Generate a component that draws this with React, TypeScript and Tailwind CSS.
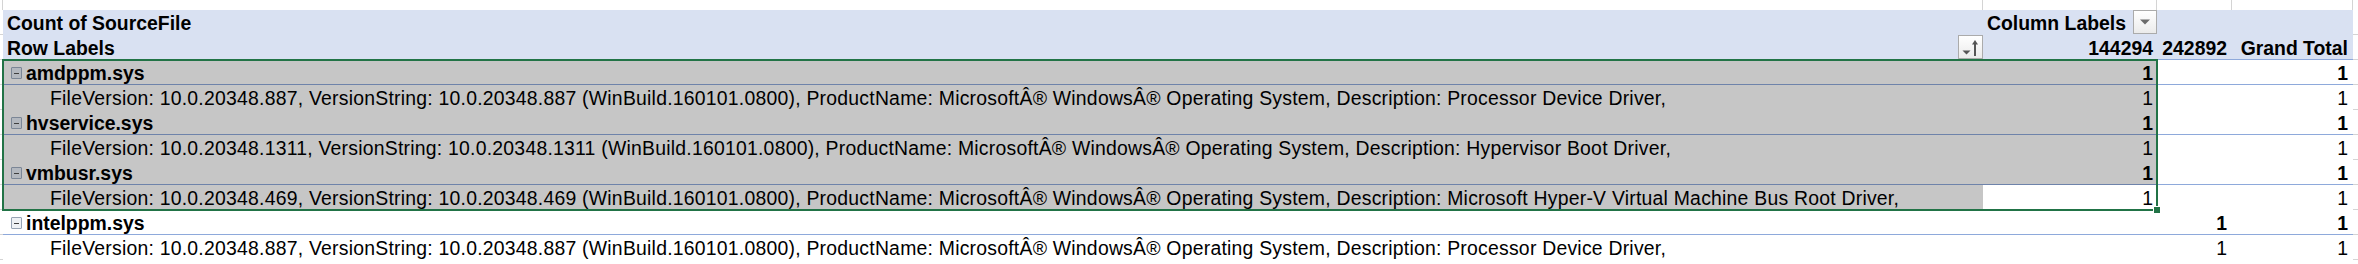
import React from 'react';
import clsx from 'clsx';

type PivotRow = {
  kind: 'group' | 'detail';
  label: string;
  b?: string;
  c?: string;
  d: string;
};

const rows: PivotRow[] = [
  { kind: 'group', label: 'amdppm.sys', b: '1', d: '1' },
  {
    kind: 'detail',
    label:
      'FileVersion: 10.0.20348.887, VersionString: 10.0.20348.887 (WinBuild.160101.0800), ProductName: MicrosoftÂ® WindowsÂ® Operating System, Description: Processor Device Driver,',
    b: '1',
    d: '1',
  },
  { kind: 'group', label: 'hvservice.sys', b: '1', d: '1' },
  {
    kind: 'detail',
    label:
      'FileVersion: 10.0.20348.1311, VersionString: 10.0.20348.1311 (WinBuild.160101.0800), ProductName: MicrosoftÂ® WindowsÂ® Operating System, Description: Hypervisor Boot Driver,',
    b: '1',
    d: '1',
  },
  { kind: 'group', label: 'vmbusr.sys', b: '1', d: '1' },
  {
    kind: 'detail',
    label:
      'FileVersion: 10.0.20348.469, VersionString: 10.0.20348.469 (WinBuild.160101.0800), ProductName: MicrosoftÂ® WindowsÂ® Operating System, Description: Microsoft Hyper-V Virtual Machine Bus Root Driver,',
    b: '1',
    d: '1',
  },
  { kind: 'group', label: 'intelppm.sys', c: '1', d: '1' },
  {
    kind: 'detail',
    label:
      'FileVersion: 10.0.20348.887, VersionString: 10.0.20348.887 (WinBuild.160101.0800), ProductName: MicrosoftÂ® WindowsÂ® Operating System, Description: Processor Device Driver,',
    c: '1',
    d: '1',
  },
];

// selection covers A3:B8, active cell is B8
const SELECTED_ROWS = 6;
const ACTIVE_ROW = 5;

const cols = 'grid grid-cols-[3px_1980px_174px_75px_121px_5px]';
const cell = 'flex items-end overflow-hidden whitespace-nowrap leading-[21px] border-b';

const MinusBox: React.FC<{ selected: boolean }> = ({ selected }) => (
  <span
    className={clsx(
      'mb-[5px] mr-[4px] flex h-[12px] w-[11px] shrink-0 items-center justify-center self-end rounded-[1px] border',
      selected ? 'border-[#7b8696] bg-[#b3b8bf]' : 'border-[#97a3b3] bg-[#eef1f4]'
    )}
  >
    <span className="h-[1px] w-[5px] bg-[#3f3f3f]" />
  </span>
);

const DropButton: React.FC = () => (
  <span className="flex h-[24px] w-[24px] shrink-0 items-center justify-center self-start border border-[#ababab] bg-gradient-to-b from-white to-[#ebebeb]">
    <svg width="12" height="6" viewBox="0 0 12 6">
      <path d="M1 0.5 L11 0.5 L6 5.5 Z" fill="#6b6b6b" />
    </svg>
  </span>
);

const SortButton: React.FC = () => (
  <span className="block h-[24px] w-[25px] shrink-0 self-start border border-[#ababab] bg-gradient-to-b from-white to-[#ebebeb]">
    <svg width="23" height="22" viewBox="0 0 23 22">
      <path d="M3.5 14.5 L11.5 14.5 L7.5 18.5 Z" fill="#555" />
      <rect x="15" y="7" width="2" height="13" fill="#555" />
      <path d="M13 8.5 L19 8.5 L16 4 Z" fill="#555" />
    </svg>
  </span>
);

const App: React.FC = () => {
  return (
    <div className="relative h-[264px] w-[2358px] overflow-hidden bg-white font-['Liberation_Sans',Arial,sans-serif] text-[19.4px] text-black">
      {/* partial top row */}
      <div className={clsx(cols, 'h-[10px]')}>
        {[0, 1, 2, 3, 4].map(i => (
          <div key={i} className="border-r border-[#d4d4d4]" />
        ))}
        <div />
      </div>

      {/* header row 1 */}
      <div className={clsx(cols, 'h-[25px]')}>
        <div className={clsx(cell, 'border-[#d4d4d4]')} />
        <div className={clsx(cell, 'border-transparent bg-[#d9e1f2] pl-[4px] font-bold')}>Count of SourceFile</div>
        <div className={clsx(cell, 'justify-end border-transparent bg-[#d9e1f2] font-bold')}>
          <span className="mr-[7px]">Column Labels</span>
          <DropButton />
        </div>
        <div className={clsx(cell, 'border-transparent bg-[#d9e1f2]')} />
        <div className={clsx(cell, 'border-transparent bg-[#d9e1f2]')} />
        <div className={clsx(cell, 'border-[#d4d4d4]')} />
      </div>

      {/* header row 2 */}
      <div className={clsx(cols, 'h-[25px]')}>
        <div className={clsx(cell, 'border-[#d4d4d4]')} />
        <div className={clsx(cell, 'justify-between border-[#8ea9db] bg-[#d9e1f2] pl-[4px] font-bold')}>
          <span>Row Labels</span>
          <SortButton />
        </div>
        <div className={clsx(cell, 'justify-end border-[#8ea9db] bg-[#d9e1f2] pr-[4px] font-bold')}>144294</div>
        <div className={clsx(cell, 'justify-end border-[#8ea9db] bg-[#d9e1f2] pr-[5px] font-bold')}>242892</div>
        <div className={clsx(cell, 'justify-end border-[#8ea9db] bg-[#d9e1f2] pr-[5px] font-bold')}>Grand Total</div>
        <div className={clsx(cell, 'border-[#d4d4d4]')} />
      </div>

      {rows.map((row, i) => {
        const group = row.kind === 'group';
        const selA = i < SELECTED_ROWS;
        const selB = i < SELECTED_ROWS && i !== ACTIVE_ROW;
        const line = (sel: boolean) =>
          group ? (sel ? 'border-[#6e83aa]' : 'border-[#8ea9db]') : 'border-transparent';
        return (
          <div key={i} className={clsx(cols, 'h-[25px]')}>
            <div className={clsx(cell, 'border-[#d4d4d4]')} />
            <div
              className={clsx(
                cell,
                line(selA),
                selA && 'bg-[#c6c6c6]',
                group ? 'pl-[8px] font-bold' : 'pl-[47px] tracking-[0.23px]'
              )}
            >
              {group && <MinusBox selected={selA} />}
              <span>{row.label}</span>
            </div>
            <div className={clsx(cell, line(selB), selB && 'bg-[#c6c6c6]', 'justify-end pr-[4px]', group && 'font-bold')}>
              {row.b}
            </div>
            <div className={clsx(cell, line(false), 'justify-end pr-[5px]', group && 'font-bold')}>{row.c}</div>
            <div className={clsx(cell, line(false), 'justify-end pr-[5px]', group && 'font-bold')}>{row.d}</div>
            <div className={clsx(cell, 'border-[#d4d4d4]')} />
          </div>
        );
      })}

      {/* selection outline over A3:B8 */}
      <div className="pointer-events-none absolute left-[2px] top-[59px] h-[152px] w-[2156px] border-2 border-[#217346]" />
      <div className="pointer-events-none absolute left-[2153px] top-[206px] h-[8px] w-[8px] border border-white bg-[#217346]" />
    </div>
  );
};

export default App;
